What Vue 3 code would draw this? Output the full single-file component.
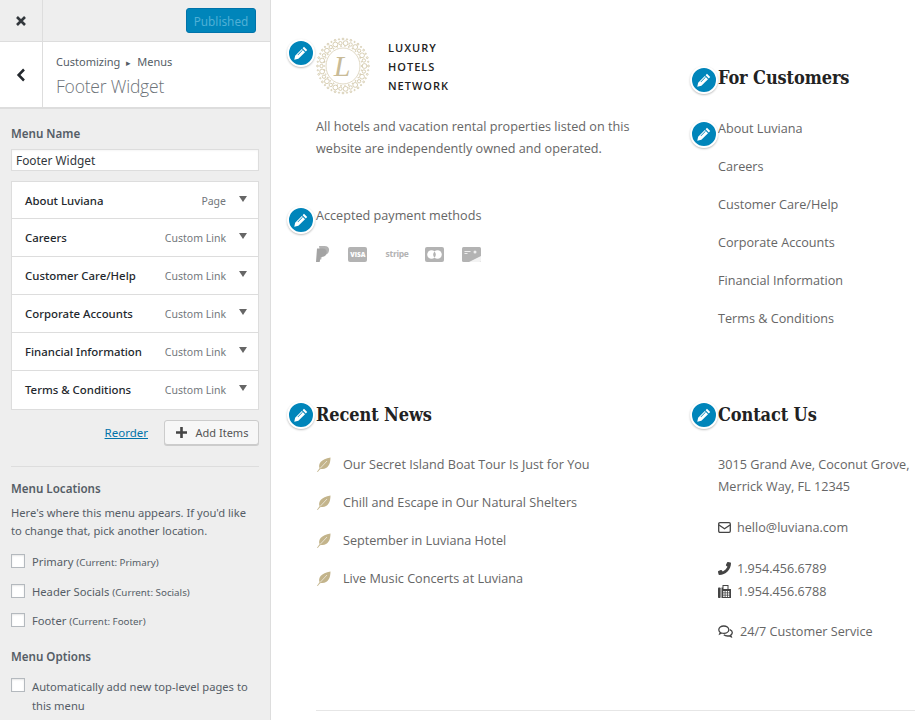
<template>
  <div class="app">
    <aside class="sidebar">
      <div class="topbar">
        <button class="close" aria-label="Close">
          <svg width="12" height="12" viewBox="0 0 12 12"><path d="M2 2l8 8M10 2l-8 8" stroke="#32373c" stroke-width="2.6" /></svg>
        </button>
        <button class="publish">Published</button>
      </div>
      <div class="title-bar">
        <button class="back" aria-label="Back">
          <svg width="10" height="14" viewBox="0 0 10 14"><path d="M8 1.500L2.600 7 8 12.500" fill="none" stroke="#23282d" stroke-width="2.500" /></svg>
        </button>
        <div class="title-text">
          <div class="crumbs">Customizing<span class="crumb-arrow">▸</span>Menus</div>
          <div class="title">Footer Widget</div>
        </div>
      </div>

      <div class="panel">
        <label class="label" for="menu-name">Menu Name</label>
        <input id="menu-name" class="name-input" value="Footer Widget" />

        <ul class="items">
          <li v-for="item in menuItems" :key="item.name" class="item">
            <span class="item-name">{{ item.name }}</span>
            <span class="item-type">{{ item.type }}</span>
            <span class="item-arrow"></span>
          </li>
        </ul>

        <div class="item-actions">
          <a class="reorder" href="#">Reorder</a>
          <button class="add-items">
            <svg width="13" height="13" viewBox="0 0 13 13"><path d="M6.500 1v11M1 6.500h11" stroke="#444" stroke-width="2.600" /></svg>
            Add Items
          </button>
        </div>

        <hr class="divider" />

        <div class="label">Menu Locations</div>
        <p class="help">Here's where this menu appears. If you'd like to change that, pick another location.</p>
        <div class="locations">
          <label v-for="loc in locations" :key="loc.name" class="check">
            <span class="box"></span>
            <span>{{ loc.name }} <small>(Current: {{ loc.current }})</small></span>
          </label>
        </div>

        <div class="label options-label">Menu Options</div>
        <label class="check auto-add">
          <span class="box"></span>
          <span>Automatically add new top-level pages to this menu</span>
        </label>
      </div>
    </aside>

    <main class="preview">
      <div class="footer-grid">
        <section class="widget">
          <span class="pencil logo-pencil"><svg viewBox="0 0 16 16"><path :d="pencilPath" /></svg></span>
          <div class="brand">
            <svg class="logo" width="54" height="58" viewBox="0 0 54 58">
              <ellipse cx="27" cy="29" rx="17" ry="18" fill="none" stroke="#d8ceb4" stroke-width="0.8" />
              <circle v-for="d in wreath" :key="d.id" :cx="d.x" :cy="d.y" :r="d.r" fill="none" stroke="#d3c8aa" stroke-width="0.9" />
              <text x="26" y="39" text-anchor="middle" class="logo-letter">L</text>
            </svg>
            <div class="brand-name">LUXURY<br />HOTELS<br />NETWORK</div>
          </div>
          <p class="about">All hotels and vacation rental properties listed on this website are independently owned and operated.</p>
          <div class="payment">
            <span class="pencil payment-pencil"><svg viewBox="0 0 16 16"><path :d="pencilPath" /></svg></span>
            <div>Accepted payment methods</div>
            <div class="cards">
              <svg width="14" height="16" viewBox="0 0 14 16"><path d="M3 0h5.500C12 0 13.500 2 13 4.500 12.500 8 10 9 7.500 9H6l-.8 4.500H1.800L3.500 3z" fill="#b3b3b3" /><path d="M1 2.500h5.500C10 2.500 11 4.500 10.500 7 10 10 8 11 5.500 11H4.500L3.700 16H0z" fill="#a3a3a3" /></svg>
              <span class="card visa">VISA</span>
              <span class="stripe">stripe</span>
              <svg width="19" height="15" viewBox="0 0 19 15"><rect width="19" height="15" rx="2" fill="#b3b3b3" /><circle cx="6.500" cy="7.500" r="4.300" fill="#fff" /><circle cx="12.500" cy="7.500" r="4.300" fill="#fff" /><path d="M9.500 4.400a4.300 4.300 0 0 1 0 6.200 4.300 4.300 0 0 1 0-6.200z" fill="#b3b3b3" /></svg>
              <svg width="19" height="15" viewBox="0 0 19 15"><rect width="19" height="15" rx="1.500" fill="#b3b3b3" /><path d="M2.500 4.500h6M2.500 6.500h3" stroke="#eee" stroke-width="1" /><circle cx="13" cy="5" r="1.500" fill="#eee" /><path d="M7 15L19 9v4.500a1.500 1.500 0 0 1-1.500 1.500z" fill="#f3f3f3" /></svg>
            </div>
          </div>
        </section>

        <section class="widget customers">
          <span class="pencil title-pencil customers-pencil"><svg viewBox="0 0 16 16"><path :d="pencilPath" /></svg></span>
          <h3 class="heading">For Customers</h3>
          <ul class="links">
            <li v-for="(link, i) in menuItems" :key="link.name">
              <span v-if="i === 0" class="pencil link-pencil"><svg viewBox="0 0 16 16"><path :d="pencilPath" /></svg></span>
              {{ link.name }}
            </li>
          </ul>
        </section>

        <section class="widget">
          <span class="pencil title-pencil"><svg viewBox="0 0 16 16"><path :d="pencilPath" /></svg></span>
          <h3 class="heading">Recent News</h3>
          <ul class="news">
            <li v-for="post in news" :key="post">
              <svg width="15" height="15" viewBox="0 0 15 15"><path d="M1 14.500C2.500 13 3 12 3.500 11 2 7 5 2 14.500.500 14.500 7 12 12.500 5.500 12 4.500 12 3.500 12.500 1.800 15z" fill="#c3b48b" /><path d="M4 11.500L11 4" stroke="#fff" stroke-width=".6" /></svg>
              <span>{{ post }}</span>
            </li>
          </ul>
        </section>

        <section class="widget contact-widget">
          <span class="pencil title-pencil"><svg viewBox="0 0 16 16"><path :d="pencilPath" /></svg></span>
          <h3 class="heading">Contact Us</h3>
          <div class="contact">
            <p class="address">3015 Grand Ave, Coconut Grove,<br />Merrick Way, FL 12345</p>
            <p class="contact-row mail">
              <svg width="13" height="11" viewBox="0 0 13 11"><rect x=".7" y=".7" width="11.600" height="9.600" rx="1.200" fill="none" stroke="#444" stroke-width="1.300" /><path d="M1 3l5.500 3.700L12 3" fill="none" stroke="#444" stroke-width="1.300" /></svg>
              hello@luviana.com
            </p>
            <p class="contact-row phone">
              <svg width="13" height="13" viewBox="0 0 13 13"><path d="M13 1.300c0-.4-.2-.6-.5-.7L10 0c-.4-.1-.7.1-.9.400L8 2.800c-.2.300-.1.700.2.900l1.300 1.100C8.700 6.500 6.700 8.600 4.800 9.500L3.700 8.200c-.2-.3-.6-.4-.9-.2L.4 9.100c-.3.200-.5.500-.4.900l.6 2.500c.1.300.3.500.7.500C7.700 13 13 7.700 13 1.300z" fill="#444" /></svg>
              1.954.456.6789
            </p>
            <p class="contact-row fax">
              <svg width="13" height="13" viewBox="0 0 13 13"><rect y="2.500" width="2.600" height="10.500" rx=".8" fill="#444" /><path d="M3.500 2.500h1V0h6v4H13v9H3.500z" fill="#444" /><path d="M5.500 1h4v3h-4zM5.200 6h1.500v1.400H5.200zM7.500 6H9v1.400H7.500zM9.800 6h1.500v1.400H9.800zM5.200 8.300h1.500v1.400H5.200zM7.500 8.300H9v1.400H7.500zM9.800 8.300h1.500v1.400H9.800zM5.200 10.500h1.500v1.400H5.200zM7.500 10.500H9v1.400H7.500zM9.800 10.500h1.500v1.400H9.800z" fill="#fff" /></svg>
              1.954.456.6788
            </p>
            <p class="contact-row service">
              <svg width="15" height="13" viewBox="0 0 15 13"><path d="M5.800 1C3 1 .8 2.600.8 4.700c0 1.100.6 2 1.500 2.700L1.700 9l2-1c.7.200 1.400.3 2.100.3 2.800 0 5-1.600 5-3.600S8.600 1 5.800 1z" fill="none" stroke="#444" stroke-width="1.300" /><path d="M11.800 4.600c1.500.6 2.500 1.700 2.500 3 0 1-.6 1.900-1.500 2.500l.5 1.700-2-1c-.6.200-1.200.2-1.800.2-1.500 0-2.800-.5-3.700-1.300" fill="none" stroke="#444" stroke-width="1.300" /></svg>
              24/7 Customer Service
            </p>
          </div>
        </section>
      </div>
      <div class="footer-line"></div>
    </main>
  </div>
</template>

<script setup>
const pencilPath = "M11.400.9l3.700 3.700-1.600 1.600-3.700-3.700zM8.900 3.400l3.700 3.700-7.600 7.600-4.700 1 1-4.700zM4.600 10.500l-.5-.5 5.300-5.300.5.500z"

const menuItems = [
  { name: "About Luviana", type: "Page" },
  { name: "Careers", type: "Custom Link" },
  { name: "Customer Care/Help", type: "Custom Link" },
  { name: "Corporate Accounts", type: "Custom Link" },
  { name: "Financial Information", type: "Custom Link" },
  { name: "Terms & Conditions", type: "Custom Link" },
]

const locations = [
  { name: "Primary", current: "Primary" },
  { name: "Header Socials", current: "Socials" },
  { name: "Footer", current: "Footer" },
]

const news = [
  "Our Secret Island Boat Tour Is Just for You",
  "Chill and Escape in Our Natural Shelters",
  "September in Luviana Hotel",
  "Live Music Concerts at Luviana",
]

// three rings of small curls make up the logo wreath
function ring(count, rx, ry, r, offset) {
  return Array.from({ length: count }, (_, i) => {
    const a = (i / count) * Math.PI * 2
    return {
      id: `${offset}-${i}`,
      x: 27 + Math.cos(a) * rx,
      y: 29 + Math.sin(a) * ry,
      r: i % 2 ? r * 0.7 : r,
    }
  })
}

const wreath = [
  ...ring(26, 21.5, 23, 2.4, "mid"),
  ...ring(40, 25.5, 27, 0.9, "out"),
  ...ring(30, 18.8, 20, 0.5, "in"),
]
</script>

<style scoped>
.app { width: 915px; height: 720px; display: flex; overflow: hidden; background: #fff; }
.sidebar { width: 271px; flex: none; height: 720px; box-sizing: border-box; overflow: hidden; background: #eee; border-right: 1px solid #ddd; font-family: "Noto Sans", sans-serif; font-size: 12px; color: #555d66; }

.topbar { height: 41px; display: flex; justify-content: space-between; align-items: center; border-bottom: 1px solid #ddd; padding-right: 14px; }
.close { width: 43px; height: 41px; padding: 0; border: 0; border-right: 1px solid #ddd; background: none; display: flex; align-items: center; justify-content: center; }
.publish { width: 70px; height: 25px; padding: 0; background: #0085ba; border: 1px solid #0073aa; border-radius: 3px; color: #4fb0d6; font: inherit; font-size: 11.8px; }

.title-bar { height: 65px; display: flex; background: #fff; border-bottom: 2px solid #ddd; }
.back { width: 43px; padding: 0; border: 0; border-right: 1px solid #ddd; background: none; display: flex; align-items: center; justify-content: center; }
.title-text { padding: 11px 0 0 13px; }
.crumbs { font-size: 11px; line-height: 18px; color: #555d66; }
.crumb-arrow { font-size: 9px; margin: 0 6px; }
.title { font-size: 17.500px; line-height: 27px; margin-top: 1px; color: #6d7379; font-weight: 300; font-family: "Open Sans", sans-serif; letter-spacing: -0.2px; }

.panel { padding: 16px 11px 0; }
.label { display: block; font-size: 11.600px; line-height: 18px; font-weight: 600; color: #555d66; }
.name-input { display: block; width: 248px; height: 22px; box-sizing: border-box; margin-top: 6px; padding: 0 4px; border: 1px solid #ddd; background: #fff; color: #32373c; font: inherit; font-size: 11.900px; box-shadow: inset 0 1px 2px rgba(0, 0, 0, 0.04); }

.items { list-style: none; margin: 10px 0 0; padding: 0; width: 248px; box-sizing: border-box; border: 1px solid #ddd; background: #fff; }
.item { height: 38px; box-sizing: border-box; display: flex; align-items: center; padding: 0 11px 0 13px; border-bottom: 1px solid #ddd; }
.item:first-child { height: 37px; padding-top: 1px; }
.item:last-child { height: 38px; padding-bottom: 1px; border-bottom: 0; }
.item-name { flex: 1; font-size: 11.400px; font-weight: 500; color: #23282d; }
.item-type { font-size: 10.500px; color: #72777c; margin-right: 13px; }
.item-arrow { width: 0; height: 0; margin-bottom: 3px; border: 4px solid transparent; border-top: 6px solid #666; border-bottom: 0; }

.item-actions { display: flex; justify-content: flex-end; align-items: center; gap: 16px; width: 248px; margin-top: 10px; }
.reorder { color: #0073aa; font-size: 11.500px; text-decoration: underline; }
.add-items { width: 95px; height: 25px; padding: 0; display: flex; align-items: center; justify-content: center; gap: 8px; border: 1px solid #ccc; border-radius: 3px; background: #f7f7f7; box-shadow: 0 1px 0 #ccc; color: #555; font: inherit; font-size: 11px; }

.divider { width: 248px; margin: 21px 0 13px; border: 0; border-top: 1px solid #ddd; }
.help { width: 248px; margin: 6px 0 0; font-size: 11.200px; line-height: 18px; }
.locations { margin-top: 13px; display: grid; gap: 10.500px; }
.check { display: flex; gap: 7px; font-size: 11.200px; line-height: 18px; }
.check small { font-size: 9.800px; }
.box { flex: none; width: 14px; height: 14px; box-sizing: border-box; border: 1px solid #b4b9be; background: #fff; margin-top: 1px; box-shadow: inset 0 1px 2px rgba(0, 0, 0, 0.1); }
.options-label { margin-top: 17px; }
.auto-add { margin-top: 11px; width: 248px; line-height: 19px; }

.preview { position: relative; flex: 1; min-width: 0; overflow: hidden; background: #fff; font-family: "Open Sans", sans-serif; font-size: 12.650px; color: #666; }
.footer-grid { display: grid; grid-template-columns: 402px 300px; grid-template-rows: 361px auto; padding: 40px 0 0 45px; }
.widget { position: relative; }
.customers { padding-top: 24px; }
.pencil { position: absolute; width: 24px; height: 24px; border-radius: 50%; background: #0085ba; border: 2px solid #fff; box-shadow: 0 1px 2px rgba(0, 0, 0, 0.25); display: flex; align-items: center; justify-content: center; }
.pencil svg { width: 14px; height: 14px; }
.pencil path { fill: #fff; fill-rule: evenodd; }
.logo-pencil { left: -29px; top: -1px; }
.payment-pencil { left: -29px; top: 1px; }
.title-pencil { left: -29px; top: 0; }
.customers-pencil { left: -28px; top: 26px; }
.contact-widget .title-pencil { left: -28px; }
.link-pencil { left: -28px; top: 1px; }

.brand { display: flex; gap: 18px; height: 59px; margin-top: -3px; }
.logo-letter { font-family: "Liberation Serif", serif; font-style: italic; font-size: 30px; fill: #c9bb97; }
.brand-name { font-size: 11px; font-weight: 600; line-height: 19px; letter-spacing: 1px; color: #222; margin-top: 1px; }
.about { margin: 19px 0 0; width: 330px; line-height: 22px; }
.payment { position: relative; margin-top: 46px; line-height: 20px; }
.cards { display: flex; align-items: center; gap: 18.300px; margin-top: 21px; height: 16px; }
.card.visa { width: 19px; height: 15px; border-radius: 2px; background: #b3b3b3; color: #fff; font-size: 6.500px; line-height: 15px; font-weight: 800; text-align: center; }
.stripe { width: 21px; font-size: 8.500px; font-weight: 700; color: #b3b3b3; letter-spacing: -0.3px; }

.heading { margin: 0; font-family: "DejaVu Serif Condensed", "DejaVu Serif", serif; font-size: 18px; line-height: 27px; font-weight: 700; color: #222; letter-spacing: -0.1px; }
.links { list-style: none; margin: 28px 0 0; padding: 0; }
.links li { position: relative; height: 38px; line-height: 18px; }

.news { list-style: none; margin: 17px 0 0; padding: 0; }
.news li { display: flex; align-items: center; gap: 12px; height: 38px; }

.contact { margin-top: 25px; }
.contact p { margin: 0; }
.address { line-height: 22px; }
.contact-row { display: flex; align-items: center; gap: 6px; line-height: 23px; }
.contact .mail { margin-top: 19px; }
.contact .phone { margin-top: 18px; }
.contact .service { margin-top: 17px; gap: 7px; }

.footer-line { height: 1px; background: #e6e6e6; position: absolute; left: 45px; right: 0; top: 710px; }
</style>

<style>
html, body { margin: 0; background: #fff; }
</style>
